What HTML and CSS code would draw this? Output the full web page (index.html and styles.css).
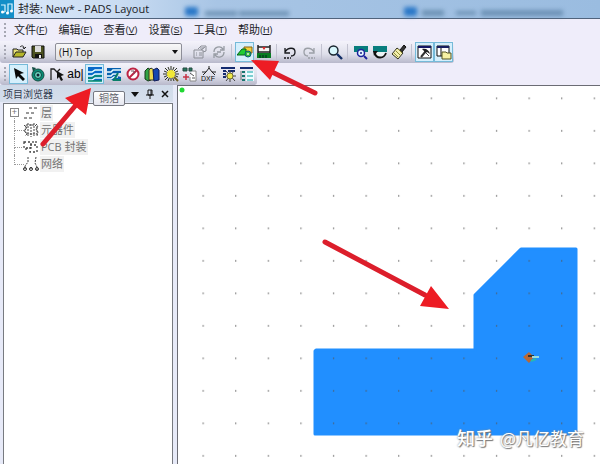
FILE: index.html
```html
<!DOCTYPE html>
<html lang="zh-CN">
<head>
<meta charset="utf-8">
<title>封装: New* - PADS Layout</title>
<link rel="stylesheet" href="styles.css">
</head>
<body>
<div class="app">
  <header class="titlebar">
    <svg class="logo" viewBox="0 0 14 18" aria-hidden="true"><rect width="14" height="18" fill="#138fc8"/><path d="M1 5h4v7M2 12h3M8 13V4h4v7" fill="none" stroke="#d9f5ff" stroke-width="1.2"/><circle cx="2.500" cy="12" r="1.500" fill="#fff"/><circle cx="7.500" cy="13" r="1.500" fill="#fff"/><circle cx="11.500" cy="11" r="1.500" fill="#fff"/></svg>
    <h1>封装: New* - PADS Layout</h1>
    <svg class="backdrop" viewBox="0 0 420 18" aria-hidden="true"><g fill="#2b78c8"><rect x="5" y="7" width="13" height="9" rx="2"/><rect x="224" y="7" width="13" height="9" rx="2"/></g><g fill="#547b9f" opacity=".65"><rect x="25" y="11" width="32" height="5"/><rect x="59" y="11" width="50" height="5"/><rect x="242" y="10" width="22" height="6"/><rect x="276" y="11" width="20" height="4"/><rect x="301" y="10" width="82" height="6"/></g></svg>
  </header>

  <nav class="menubar">
    <span class="grip"></span>
    <button>文件<span>(<u>F</u>)</span></button>
    <button>编辑<span>(<u>E</u>)</span></button>
    <button>查看<span>(<u>V</u>)</span></button>
    <button>设置<span>(<u>S</u>)</span></button>
    <button>工具<span>(<u>T</u>)</span></button>
    <button>帮助<span>(<u>H</u>)</span></button>
  </nav>

  <div class="toolbar">
    <span class="grip"></span>
    <button aria-label="打开"><svg viewBox="0 0 16 16"><path d="M2 13V5h4l1 1h5v2" fill="#e8e278" stroke="#222"/><path d="M2 13l3-5h10l-3 5z" fill="#b5b62a" stroke="#222"/><path d="M9 3c2-2 4-1 4 1m-1-1l1 2 2-2" fill="none" stroke="#222"/></svg></button>
    <button aria-label="保存"><svg viewBox="0 0 16 16"><path d="M2 2h12v12H3l-1-1z" fill="#4c5220" stroke="#111"/><path d="M5 2h6v6H5z" fill="#dcdcdc"/><path d="M5 10h7v4H5z" fill="#111"/><path d="M9 11h2v3H9z" fill="#eee"/></svg></button>
    <label class="combo"><select aria-label="层"><option>(H) Top</option></select></label>
    <button aria-label="属性"><svg viewBox="0 0 16 16" fill="none" stroke="#8c8f97"><path d="M2 6h9v8H2zM4 9h1m2 0h3M4 11h1m2 0h3M6 5l3-3h5v5l-3 1M8 4h4M9 6l4-3" /></svg></button>
    <button aria-label="刷新"><svg viewBox="0 0 16 16" fill="none" stroke="#969ba2" stroke-width="1.3"><path d="M3 8c0-5 6-7 9-3m1-3v4H9M13 8c0 5-6 7-9 3m-1 3v-4h4M6 8h4"/></svg></button>
    <span class="sep"></span>
    <button class="on" aria-label="绘图工具栏"><svg viewBox="0 0 16 16"><path d="M7 3h8v6H7z" fill="#f2ce38" stroke="#846018"/><path d="M0 11l5-6h4v6z" fill="#21cc31" stroke="#075e16"/><circle cx="11" cy="10" r="3" fill="#37b637" stroke="#075e7a"/><circle cx="11" cy="10" r="1" fill="#d4ffd9"/></svg></button>
    <button aria-label="设计工具栏"><svg viewBox="0 0 16 16"><path d="M2 3h12v5H2z" fill="#f5f5f5"/><path d="M2 1v12M14 1v12M2 3h12M2 8h12" stroke="#222" stroke-width="1.5"/><path d="M6 3h4L8 6z" fill="#d42b2b"/><path d="M1 9h14v5H1z" fill="#087b22"/><path d="M4 11v3m3-3v3m3-3v3" stroke="#022"/></svg></button>
    <span class="sep"></span>
    <button aria-label="撤消"><svg viewBox="0 0 16 16" fill="none" stroke="#17191d" stroke-width="1.3"><path d="M3 4v5h5M3 8c3-5 10-5 10 0 0 3-2 4-4 4"/><path d="M2 14h7" stroke-dasharray="2 1"/></svg></button>
    <button aria-label="重做"><svg viewBox="0 0 16 16" fill="none" stroke="#9b9fa6" stroke-width="1.3"><path d="M13 4v5H8M13 8c-3-5-10-5-10 0 0 3 2 4 4 4"/><path d="M7 14h7" stroke-dasharray="2 1"/></svg></button>
    <span class="sep"></span>
    <button aria-label="缩放"><svg viewBox="0 0 16 16"><circle cx="6.500" cy="6.500" r="4.500" fill="#d8f7fc" stroke="#17232c" stroke-width="1.4"/><path d="M10 10l5 5" stroke="#102c64" stroke-width="2.400"/></svg></button>
    <span class="sep"></span>
    <button aria-label="板视图"><svg viewBox="0 0 16 16"><path d="M1 2h14v6h-3v3H5V8H1z" fill="#087e7d"/><circle cx="8" cy="9" r="3.500" fill="#e7f6ff" stroke="#1c239d" stroke-width="1.500"/><circle cx="8" cy="9" r="1" fill="#18208b"/><path d="M11 12l3 3" stroke="#1c239d" stroke-width="2"/></svg></button>
    <button aria-label="重画"><svg viewBox="0 0 16 16"><path d="M1 2h14v6H1z" fill="#087e7d"/><path d="M3 8h10c0 3-2 5-5 5s-5-2-5-5" fill="#edf4f5"/><path d="M3 9c1 6 9 6 11 0" fill="none" stroke="#111" stroke-width="1.800"/><path d="M1 7h5l-4 5z" fill="#111"/></svg></button>
    <button aria-label="刷子"><svg viewBox="0 0 16 16"><path d="M9 6l4-5 2 2-4 5z" fill="#333" stroke="#111"/><path d="M6 4l6 5-5 6-6-5z" fill="#f4efae" stroke="#303020"/><path d="M5 7l4 4M3 9l4 4M7 5l4 4" stroke="#8e8e38"/></svg></button>
    <span class="sep"></span>
    <button class="on" aria-label="输出窗口"><svg viewBox="0 0 16 16"><path d="M1 2h13v12H1z" fill="#fff" stroke="#111"/><path d="M1 3h13" stroke="#151965" stroke-width="2"/><path d="M4 13l5-6" stroke="#333" stroke-width="2"/><path d="M5 5c4-1 7 1 8 5l-3-2-2 1-1-2z" fill="#222"/><path d="M9 9l3 3" stroke="#444"/></svg></button>
    <button class="on" aria-label="项目浏览器"><svg viewBox="0 0 16 16"><path d="M1 2h12v10H1zM5 4v8" fill="#fff" stroke="#111"/><path d="M1 3h12" stroke="#18205f" stroke-width="2"/><path d="M6 8h4l1 1h4v6H6z" fill="#f7f2a4" stroke="#555520"/></svg></button>
  </div>

  <div class="toolbar">
    <span class="grip"></span>
    <button class="on" aria-label="选择"><svg viewBox="0 0 16 16"><path d="M3 2l10 5-4 1 5 5-2 2-5-5-2 3z" fill="#080808"/></svg></button>
    <button aria-label="端点"><svg viewBox="0 0 16 16"><circle cx="8" cy="9" r="6" fill="#078b75" stroke="#174d43"/><path d="M2 1l4 1-3 4z" fill="#124c42"/><circle cx="8" cy="9" r="3.500" fill="#70d3c0" stroke="#08483e"/><circle cx="8" cy="9" r="1.500" fill="#123"/></svg></button>
    <button aria-label="二维线"><svg viewBox="0 0 16 16"><path d="M2 14V3h3l3 3 3-3" fill="none" stroke="#222" stroke-width="1.300"/><path d="M8 5l7 4-3 1 2 4-2 1-2-4-2 2z" fill="#111"/></svg></button>
    <button class="text-tool" aria-label="文本">ab|</button>
    <button class="on" aria-label="铜箔"><svg viewBox="0 0 16 16"><path d="M1 1h14v14H1z" fill="#0869c9"/><path d="M1 6h4l3-2h7M1 10h4l3-2h7M1 14h4l3-2h7" fill="none" stroke="#eaffff" stroke-width="1.500"/><path d="M1 12h4l3-2h7M1 15h14" fill="none" stroke="#078d6c" stroke-width="1.500"/></svg></button>
    <button aria-label="铜箔挖空区"><svg viewBox="0 0 16 16"><path d="M1 2h14v5h-4v3l4 1v3H1z" fill="#0760ae"/><path d="M1 6h4l2-2h8M1 10h4l2-2h5M1 13h4l3-2h4" fill="none" stroke="#e8fcff" stroke-width="1.500"/><path d="M12 7l-4 7h7" fill="none" stroke="#087e68" stroke-width="2"/></svg></button>
    <button aria-label="禁止区"><svg viewBox="0 0 16 16"><circle cx="8" cy="8" r="5.500" fill="#fff" stroke="#bd2444" stroke-width="2"/><path d="M4 12l8-8" stroke="#bd2444" stroke-width="2"/><path d="M6 5h3v3" fill="none" stroke="#775060"/></svg></button>
    <button aria-label="库"><svg viewBox="0 0 16 16"><path d="M1 5l3-3 3 2v10l-3 1-3-2z" fill="#32a343" stroke="#16371a"/><path d="M5 4l2-2 3 2v10H5z" fill="#edda4d" stroke="#303a29"/><path d="M9 4l4-2 2 2v10l-5 1z" fill="#1647b0" stroke="#101c56"/></svg></button>
    <button aria-label="向导"><svg viewBox="0 0 16 16"><path d="M8 0v15M0 8h16M2 2l12 12M14 2L2 14M5 1l6 14M11 1L5 15M1 5l14 6M1 11l14-6" stroke="#2d3020"/><circle cx="8" cy="8" r="4" fill="#f1e838"/><path d="M11 11l4 4" stroke="#705e20" stroke-width="2"/></svg></button>
    <button aria-label="编号"><svg viewBox="0 0 16 16"><path d="M1 2h4v3H1zm6 0h3v3H7z" fill="#28785f" stroke="#24493e"/><path d="M10 5h4v10H8v-4" fill="#fff" stroke="#888"/><path d="M1 11h6M4 8v6" stroke="#c63345" stroke-width="1.500"/><path d="M8 7l4 3m-2 2h3" stroke="#555"/></svg></button>
    <button aria-label="导入 DXF"><svg viewBox="0 0 16 16"><path d="M1 6h4l3-4 3 4h4M5 6l-3 3m9-3l3 3M8 2V0" fill="none" stroke="#222"/><text x="0" y="15" font-size="7" font-family="Liberation Sans" fill="#111">DXF</text></svg></button>
    <button aria-label="查找"><svg viewBox="0 0 16 16"><path d="M1 2h14M3 5h3m2 0h7M3 8h3M3 11h3" stroke="#142b70" stroke-width="2"/><path d="M6 5l9 10M14 5L6 15M10 4v12M5 10h11" stroke="#444"/><circle cx="10" cy="10" r="3" fill="#eee94b" stroke="#77712b"/></svg></button>
    <button aria-label="选项"><svg viewBox="0 0 16 16"><path d="M7 5h8v10H7z" fill="#effcff"/><path d="M1 2h13" stroke="#142b70" stroke-width="2"/><path d="M2 5v9" stroke="#777"/><path d="M3 6h3M3 10h3M3 14h3" stroke="#18756f" stroke-width="2"/><path d="M8 6h6M8 10h6M8 14h6" stroke="#57bec2" stroke-width="1.500"/></svg></button>
    <span class="tooltip" role="tooltip">铜箔</span>
  </div>

  <main class="workspace">
    <aside class="explorer">
      <header class="panel-title">
        <h2>项目浏览器</h2>
        <button aria-label="菜单"><svg viewBox="0 0 10 10"><path d="M1 3h8L5 8z" fill="#111"/></svg></button>
        <button aria-label="固定"><svg viewBox="0 0 10 10"><path d="M3 1h4v5H3zM1 6h8M5 6v4M6 1v5" fill="none" stroke="#111"/></svg></button>
        <button aria-label="关闭"><svg viewBox="0 0 10 10"><path d="M2 2l6 6M8 2L2 8" stroke="#111" stroke-width="1.500"/></svg></button>
      </header>
      <ul class="tree">
        <li><button class="expand" aria-label="展开">+</button><svg viewBox="0 0 16 16"><path d="M6 3h9M3 8h9M1 13h9" fill="none" stroke="#333" stroke-dasharray="3 2"/></svg><span>层</span></li>
        <li><svg viewBox="0 0 16 16"><path d="M3 3h9l2 2v7H4L2 9zM1 3l3 3-3 3 3 3-2 2M13 2l2 2-2 3 2 3-1 4M5 1v13M8 2v13M11 1v13" fill="none" stroke="#444" stroke-dasharray="2 1"/></svg><span>元器件</span></li>
        <li><svg viewBox="0 0 16 16"><path d="M1 3h7v6H1zM7 6h7v7H7zM3 9v4M10 2v4M13 2v4" fill="none" stroke="#444" stroke-width="1.300" stroke-dasharray="2 2"/></svg><span>PCB 封装</span></li>
        <li><svg viewBox="0 0 16 16"><path d="M5 1v5l-3 4v3M8 11v3m5-13l-1 6 2 4v3" fill="none" stroke="#444" stroke-dasharray="2 1"/><g fill="none" stroke="#333"><circle cx="2" cy="13" r="1.500"/><circle cx="8" cy="13" r="1.500"/><circle cx="14" cy="13" r="1.500"/></g></svg><span>网络</span></li>
      </ul>
    </aside>
    <section class="canvas" aria-label="板图">
      <svg aria-hidden="true">
        <defs><pattern id="grid" x="8.700" y="-4.400" width="32.600" height="32.500" patternUnits="userSpaceOnUse"><rect x="16" y="16" width="1" height="1.500" fill="#555"/></pattern></defs>
        <path d="M138 264h159V209l46-46h55v185H137v-83z" fill="#218fff" stroke="#218fff" stroke-width="3" stroke-linejoin="round"/>
        <rect width="100%" height="100%" fill="url(#grid)"/>
        <circle cx="4" cy="4" r="2.500" fill="#20d832"/>
        <path d="M345 271l6-5 5 5-5 6z" fill="#b96835"/><path d="M353 275l5-2" stroke="#26b8b3" stroke-width="2"/><path d="M350 270h6" stroke="#333" stroke-width="2"/><path d="M354 271h7" stroke="#9cdbdc" stroke-width="2"/>
      </svg>
    </section>
  </main>

  <svg class="annotations" aria-hidden="true">
    <g stroke="#dc1e2b" stroke-width="5" stroke-linecap="round"><path d="M43 144L76 105M315 93L270 71M325 242L425 295"/></g>
    <g fill="#ed1c24"><path d="M91 88l-5 27-21-17zM251 60l28 1-9 19zM449 309l-29-3 11-20z"/></g>
  </svg>
  <p class="watermark"><b>知乎</b> <span>@凡亿教育</span></p>
</div>
</body>
</html>
```

FILE: styles.css
```css
* { box-sizing: border-box; }
html, body { height: 100%; margin: 0; }
body {
  font: 11px "Open Sans", "Noto Sans CJK SC", sans-serif;
  color: #202126;
}
button { font: inherit; color: inherit; border: 0; padding: 0; background: none; }
h1, h2 { margin: 0; font-size: 11px; font-weight: 400; white-space: nowrap; }

.app {
  position: relative;
  display: flex;
  flex-direction: column;
  min-height: 100%;
  overflow: hidden;
  background: #efedfa;
}
.titlebar {
  display: flex;
  align-items: center;
  gap: 4px;
  height: 19px;
  background: linear-gradient(90deg, #dceafa, #c9dcf2 20%, #a8c5e5 36%, #9abce0);
  border-bottom: 1px solid #50637c;
}
.titlebar h1 { line-height: 18px; }
.logo { flex: none; width: 14px; height: 18px; }
.backdrop { flex: none; width: 420px; height: 18px; margin-left: auto; filter: blur(2px); }

.menubar { display: flex; align-items: center; height: 22px; padding-left: 4px; }
.menubar button { display: flex; align-items: center; margin: 0 6px 0 5px; line-height: 20px; }
.menubar .grip + button { margin-left: 8px; }
.menubar button span { font: 9px "Liberation Sans", sans-serif; }
.menubar u { text-underline-offset: 1px; }

.grip {
  flex: none;
  width: 2px;
  height: 14px;
  background: repeating-linear-gradient(#a6a7b3 0 2px, transparent 2px 4px);
}
.toolbar {
  position: relative;
  display: flex;
  align-items: center;
  align-self: flex-start;
  height: 22px;
  padding: 0 1px 0 4px;
  border-radius: 0 0 3px 3px;
  background: linear-gradient(#f4f3fb, #dedfea 60%, #b8b8cb);
}
.toolbar .grip { margin-right: 3px; }
.toolbar button {
  display: grid;
  place-items: center;
  flex: none;
  width: 19px;
  height: 20px;
}
.toolbar button svg { width: 16px; height: 16px; }
.toolbar button.on { background: #d5effc; border: 1px solid #75bad9; }
.sep { width: 1px; height: 16px; margin: 0 3px; background: #c2c2d0; }
.combo { position: relative; margin: 0 8px; }
.combo select {
  display: block;
  width: 127px;
  height: 18px;
  padding: 0 3px;
  border: 1px solid #8d8e98;
  border-radius: 2px;
  appearance: none;
  background: linear-gradient(#f8f8f8, #dedee0);
  font: 10px "Open Sans", sans-serif;
  color: #111;
}
.combo::after {
  content: "";
  position: absolute;
  right: 4px;
  top: 7px;
  border: 3px solid transparent;
  border-top: 4px solid #111;
}
.toolbar .text-tool { font: 500 12px "Liberation Sans", sans-serif; color: #000; }
.tooltip {
  position: absolute;
  z-index: 1;
  left: 93px;
  top: 28px;
  padding: 0 5px;
  border: 1px solid #777982;
  border-radius: 2px;
  background: linear-gradient(#fff, #e6e7f0);
  color: #62646c;
  font-size: 10px;
  line-height: 13px;
}

.workspace { display: flex; flex: 1; }
.explorer {
  display: flex;
  flex-direction: column;
  flex: none;
  width: 177px;
  padding-right: 4px;
  background: #e7eaf8;
}
.panel-title {
  display: flex;
  align-items: center;
  gap: 5px;
  height: 17px;
  padding: 0 3px;
  background: linear-gradient(#cfdae9, #d6dfec);
}
.panel-title h2 { flex: 1; font-size: 10px; color: #343d50; }
.panel-title button { display: grid; width: 10px; height: 10px; }
.tree {
  flex: 1;
  margin: 1px 0 0 3px;
  padding: 0 0 0 6px;
  border: solid #777a80;
  border-width: 1px 1px 0 1px;
  background: #fff;
  list-style: none;
  color: #737373;
}
.tree li { display: flex; align-items: center; height: 17px; position: relative; padding-left: 13px; }
.tree li:not(:first-child)::before {
  content: "";
  position: absolute;
  left: 4px;
  top: 0;
  width: 9px;
  height: 9px;
  border: dotted #999;
  border-width: 0 0 1px 1px;
}
.tree li:not(:last-child)::after {
  content: "";
  position: absolute;
  left: 4px;
  top: 9px;
  height: 8px;
  border-left: 1px dotted #999;
}
.tree svg { width: 16px; height: 16px; }
.tree span { margin-left: 1px; padding: 0 1px; line-height: 16px; background: #f1f1f1; }
.tree .expand {
  position: absolute;
  z-index: 1;
  left: 0;
  top: 4px;
  width: 9px;
  height: 9px;
  border: 1px solid #888;
  background: #fff;
  font: 9px/7px "Liberation Sans", sans-serif;
}
.canvas {
  flex: 1;
  min-width: 0;
  display: flex;
  border: solid #6b6c74;
  border-width: 1px 0 0 1px;
  background: #fff;
}
.canvas svg { width: 100%; height: auto; }
.annotations { position: absolute; inset: 0; width: 100%; height: 100%; pointer-events: none; }
.watermark {
  position: absolute;
  right: 16px;
  bottom: 14px;
  margin: 0;
  font: 17px/24px "Noto Sans CJK SC", sans-serif;
  color: #fff;
  text-shadow: 1px 1px 1px #777, 0 0 2px #888;
}
.watermark b { margin-right: 3px; font-size: 18px; font-weight: 500; }
```
